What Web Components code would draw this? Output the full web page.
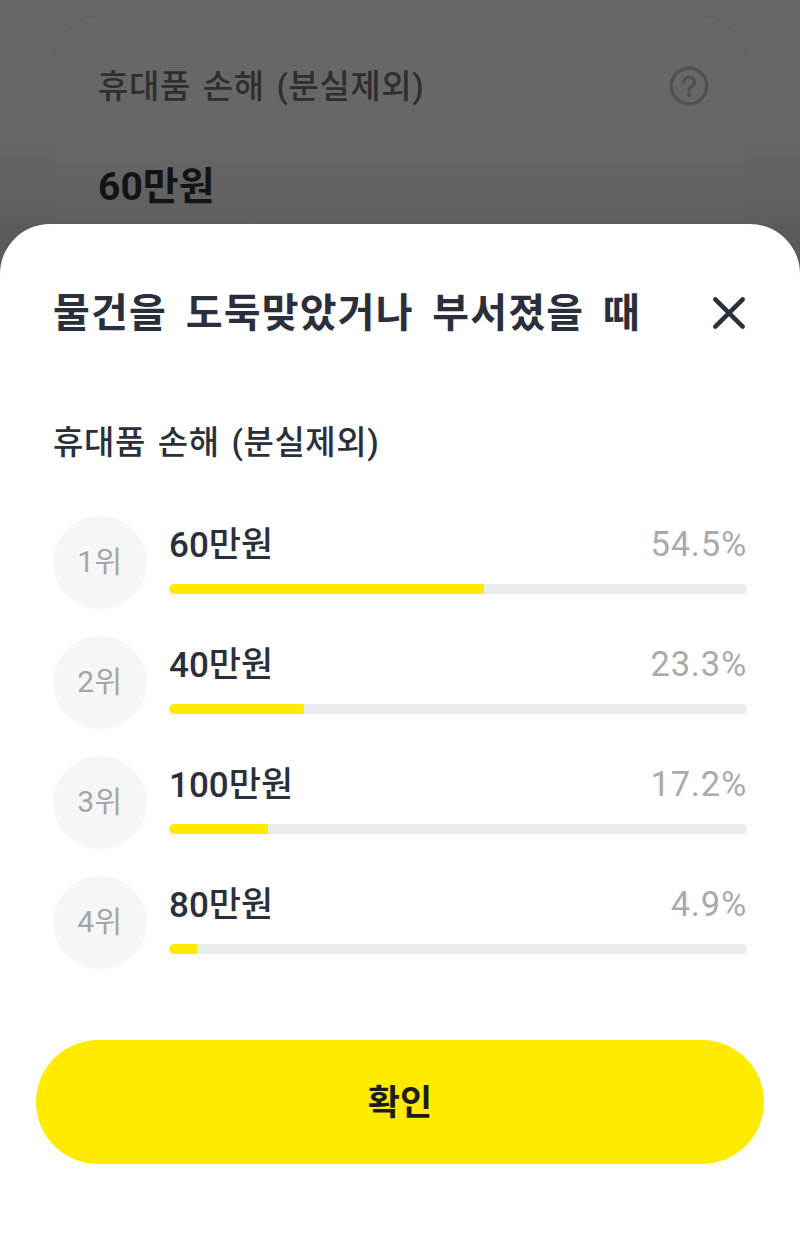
<!DOCTYPE html>
<html lang="ko">
<head>
<meta charset="utf-8">
<title>휴대품 손해</title>
<style>
  html, body { margin: 0; padding: 0; }
  body { font-family: Roboto, "Noto Sans CJK KR", sans-serif; background: #fff; }
</style>
</head>
<body>
<claim-page>
  <dimmed-card slot="behind" label="휴대품 손해 (분실제외)" amount="60만원"></dimmed-card>
  <bottom-sheet slot="sheet" heading="물건을 도둑맞았거나 부서졌을 때" subheading="휴대품 손해 (분실제외)">
    <rank-row rank="1위" amount="60만원" percent="54.5"></rank-row>
    <rank-row rank="2위" amount="40만원" percent="23.3"></rank-row>
    <rank-row rank="3위" amount="100만원" percent="17.2"></rank-row>
    <rank-row rank="4위" amount="80만원" percent="4.9"></rank-row>
    <confirm-button slot="action">확인</confirm-button>
  </bottom-sheet>
</claim-page>

<script>
class ClaimPage extends HTMLElement {
    constructor() {
        super();
        this.attachShadow({ mode: 'open' });
        this.shadowRoot.innerHTML = `
      <style>
        :host { display: flex; flex-direction: column; width: 800px; height: 1248px; overflow: hidden; background: #666; }
        .behind { height: 224px; flex: none; overflow: hidden; background: linear-gradient(#666 0, #666 140px, #5e5e5e 224px); }
        .sheet { flex: 1; display: flex; min-height: 0; background: #5b5b5b; }
      </style>
      <div class="behind"><slot name="behind"></slot></div>
      <div class="sheet"><slot name="sheet"></slot></div>
    `;
    }
}

class DimmedCard extends HTMLElement {
    constructor() {
        super();
        this.attachShadow({ mode: 'open' });
        this.shadowRoot.innerHTML = `
      <style>
        :host { display: block; margin: 16px 55px 0; height: 300px; box-sizing: border-box; padding: 44px 36px 0 43px;
          border-radius: 48px; background: rgba(255, 255, 255, 0.012); box-shadow: 0 0 3px rgba(0, 0, 0, 0.04); }
        .top { display: flex; justify-content: space-between; align-items: center; height: 48px; }
        .label { font-size: 33px; font-weight: 500; color: #2f2f2f; letter-spacing: 0.6px; word-spacing: 3px; }
        svg { display: block; width: 40px; height: 40px; position: relative; top: 2px; }
        .amount { margin-top: 56px; font-size: 39px; line-height: 46px; font-weight: 700; color: #141414; }
      </style>
      <div class="top">
        <span class="label"></span>
        <svg viewBox="0 0 40 40" fill="none">
          <circle cx="20" cy="20" r="17.8" stroke="#505050" stroke-width="3.2"/>
          <path d="M14.6 16.2c0-3 2.4-5 5.5-5s5.4 1.9 5.4 4.7c0 4-5.5 4.2-5.5 8.2" stroke="#505050" stroke-width="3.2" stroke-linecap="round"/>
          <circle cx="20" cy="29" r="2.2" fill="#505050"/>
        </svg>
      </div>
      <div class="amount"></div>
    `;
    }

    connectedCallback() {
        this.shadowRoot.querySelector('.label').textContent = this.getAttribute('label');
        this.shadowRoot.querySelector('.amount').textContent = this.getAttribute('amount');
    }
}

class BottomSheet extends HTMLElement {
    constructor() {
        super();
        this.attachShadow({ mode: 'open' });
        this.shadowRoot.innerHTML = `
      <style>
        :host { display: flex; flex-direction: column; flex: 1; box-sizing: border-box; background: #fff;
          border-radius: 50px 50px 0 0; padding: 64px 36px 84px; color: #2b2f3b; }
        header { display: flex; justify-content: space-between; align-items: center; padding: 0 17px; height: 50px; }
        h1 { margin: 1px 0 0; font-size: 40px; line-height: 50px; font-weight: 700; white-space: nowrap; letter-spacing: 1.2px; word-spacing: 7.5px; }
        svg { display: block; width: 34px; height: 34px; margin-right: 1px; }
        h2 { margin: 80px 17px 0; font-size: 33px; line-height: 50px; font-weight: 500; letter-spacing: 0.6px; word-spacing: 3px; }
        .rows { display: flex; flex-direction: column; gap: 27px; margin: 48px 17px 0; }
        .action { margin-top: auto; display: block; }
      </style>
      <header>
        <h1></h1>
        <svg viewBox="0 0 36 36" fill="none"><path d="M3.5 3.5l29 29M32.5 3.5l-29 29" stroke="#2b2f3b" stroke-width="4.8" stroke-linecap="round"/></svg>
      </header>
      <h2></h2>
      <div class="rows"><slot></slot></div>
      <div class="action"><slot name="action"></slot></div>
    `;
    }

    connectedCallback() {
        this.shadowRoot.querySelector('h1').textContent = this.getAttribute('heading');
        this.shadowRoot.querySelector('h2').textContent = this.getAttribute('subheading');
    }
}

class RankRow extends HTMLElement {
    constructor() {
        super();
        this.attachShadow({ mode: 'open' });
        this.shadowRoot.innerHTML = `
      <style>
        :host { display: flex; align-items: stretch; gap: 22px; height: 93px; }
        .badge { flex: none; width: 94px; height: 93px; border-radius: 50%; background: #f6f6f6; color: #a3a5a9;
          display: flex; align-items: center; justify-content: center; font-size: 30px; font-weight: 400; letter-spacing: 0.4px; padding-bottom: 8px; box-sizing: border-box; }
        .body { flex: 1; min-width: 0; display: flex; flex-direction: column; }
        .line { display: flex; justify-content: space-between; align-items: center; height: 56px; }
        .amount { font-size: 35px; font-weight: 500; color: #2b2f3b; position: relative; top: -3px; }
        .percent { font-size: 34.5px; font-weight: 400; color: #a9aaae; letter-spacing: 0.8px; }
        .track { height: 9.5px; margin-top: 12px; border-radius: 5px; background: #e9ecef; overflow: hidden; }
        .fill { height: 100%; background: #ffeb00; border-radius: 5px 0 0 5px; }
      </style>
      <div class="badge"></div>
      <div class="body">
        <div class="line"><span class="amount"></span><span class="percent"></span></div>
        <div class="track"><div class="fill"></div></div>
      </div>
    `;
    }

    connectedCallback() {
        const percent = this.getAttribute('percent');
        this.shadowRoot.querySelector('.badge').textContent = this.getAttribute('rank');
        this.shadowRoot.querySelector('.amount').textContent = this.getAttribute('amount');
        this.shadowRoot.querySelector('.percent').textContent = percent + '%';
        this.shadowRoot.querySelector('.fill').style.width = percent + '%';
    }
}

class ConfirmButton extends HTMLElement {
    constructor() {
        super();
        this.attachShadow({ mode: 'open' });
        this.shadowRoot.innerHTML = `
      <style>
        :host { display: flex; align-items: center; justify-content: center; height: 124px; border-radius: 62px; box-sizing: border-box; padding-bottom: 5px;
          background: #ffeb00; color: #1c1c1c; font-size: 35px; font-weight: 700; }
      </style>
      <slot></slot>
    `;
    }
}

customElements.define('claim-page', ClaimPage);
customElements.define('dimmed-card', DimmedCard);
customElements.define('bottom-sheet', BottomSheet);
customElements.define('rank-row', RankRow);
customElements.define('confirm-button', ConfirmButton);
</script>
</body>
</html>
